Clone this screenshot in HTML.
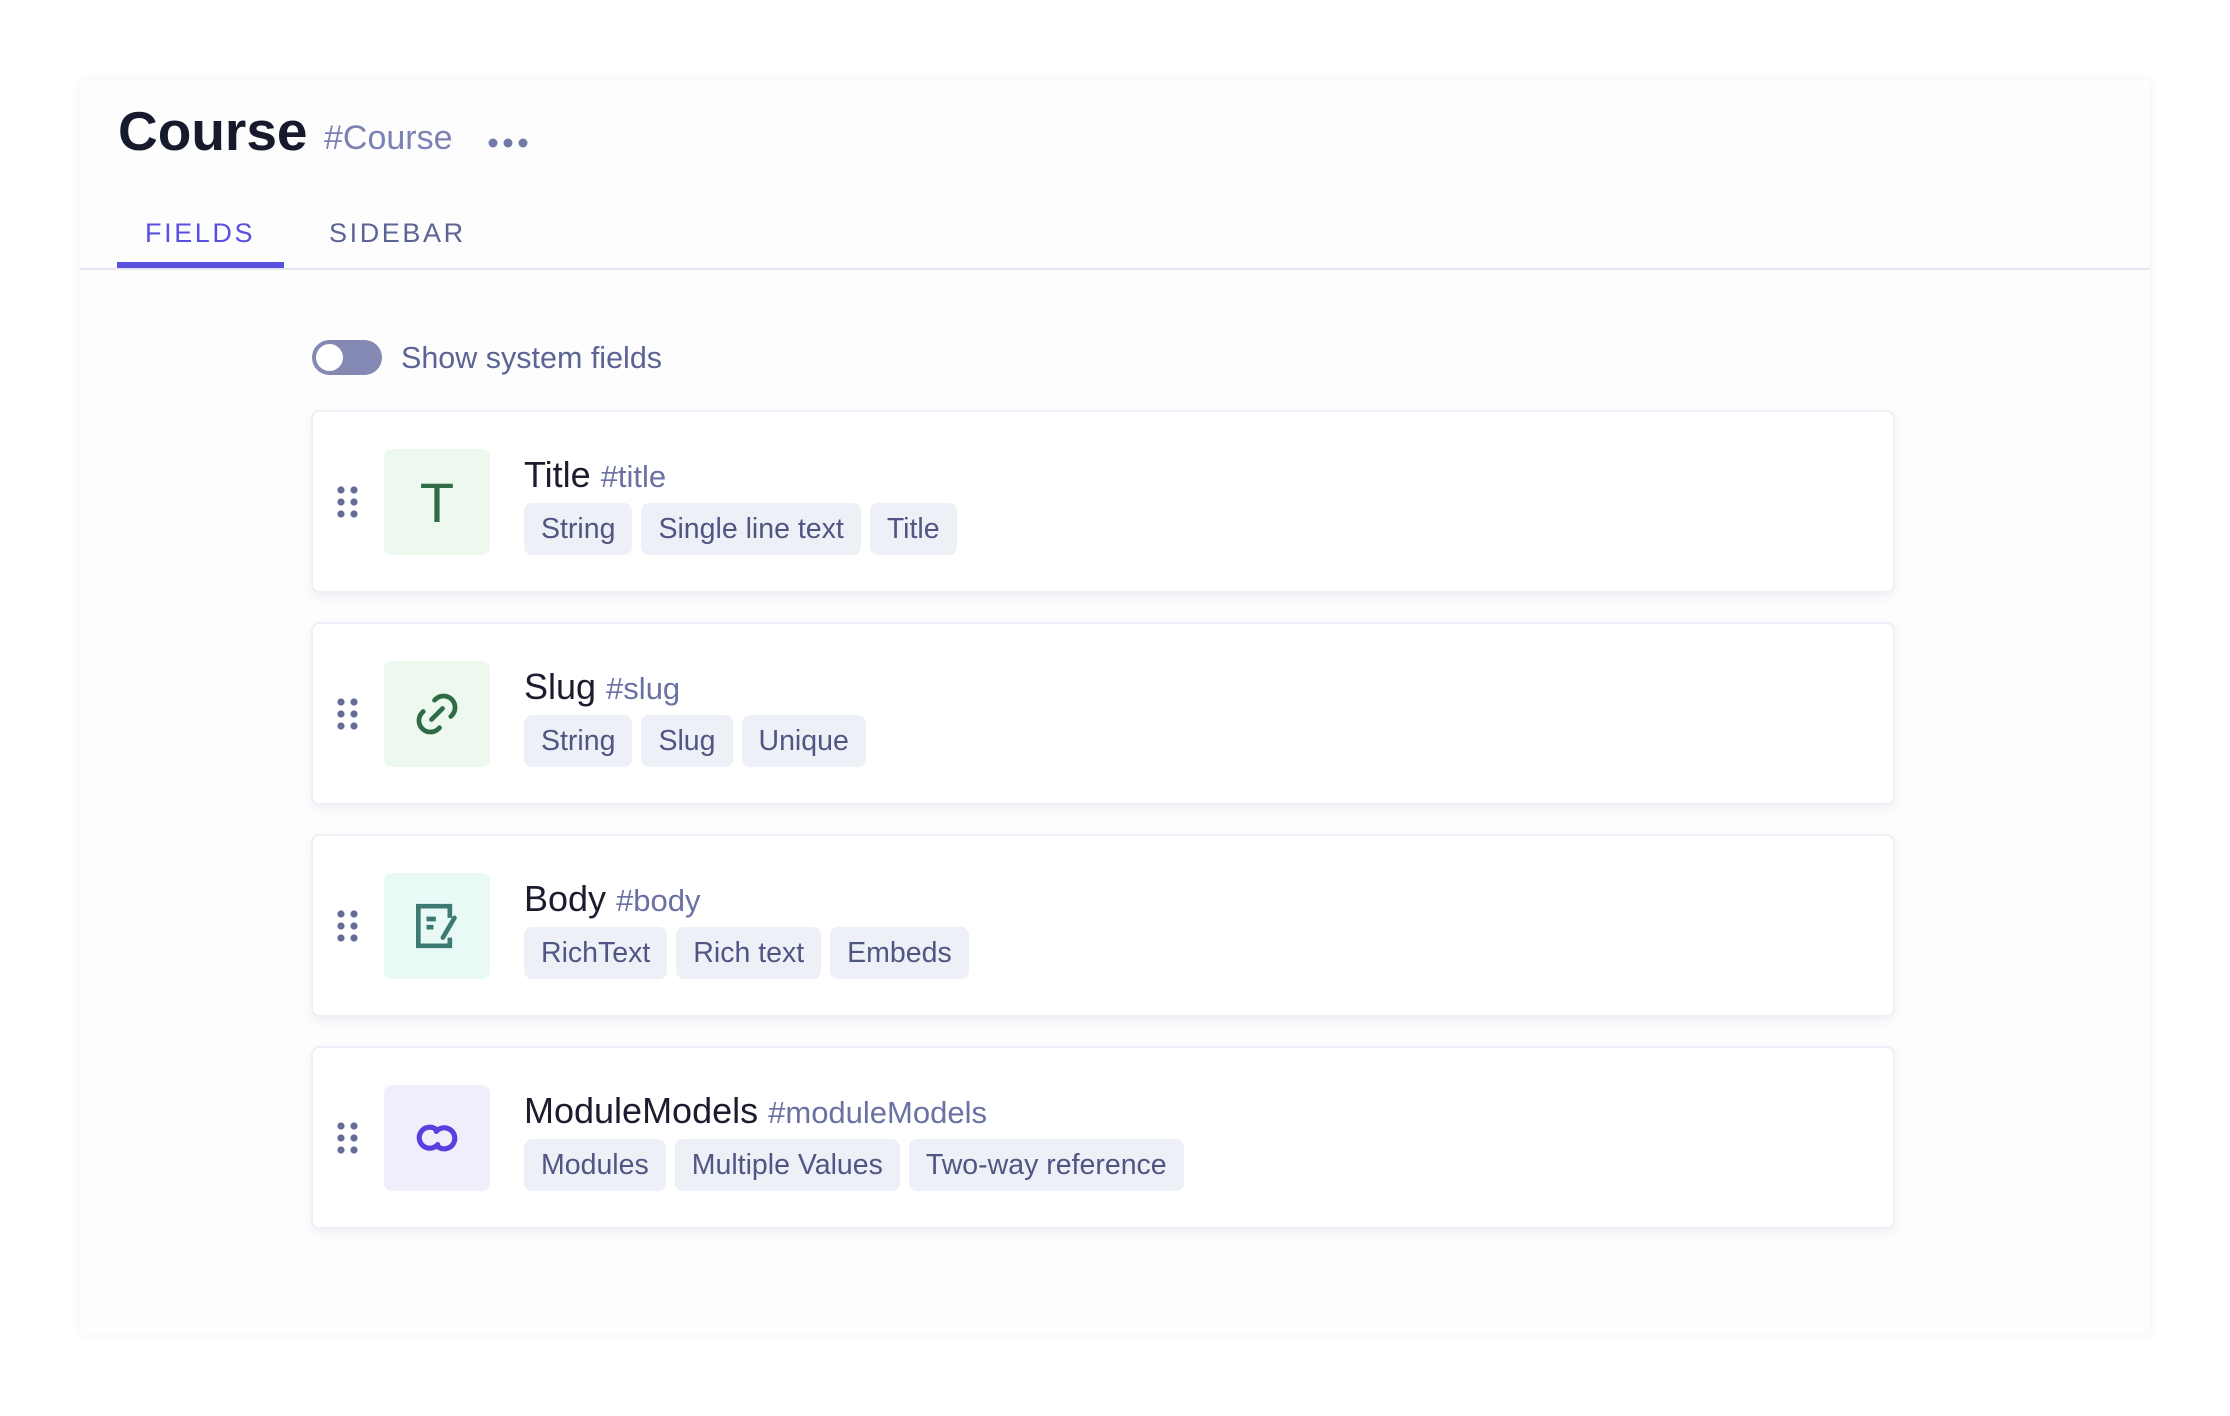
<!DOCTYPE html>
<html><head><meta charset="utf-8"><style>
*{margin:0;padding:0;box-sizing:border-box}
body{width:2230px;height:1416px;background:#fff;font-family:"Liberation Sans",sans-serif;position:relative;overflow:hidden}
.panel{position:absolute;left:80px;top:80px;width:2070px;height:1255px;background:#fdfdfe;box-shadow:0 0 8px rgba(40,50,90,.07)}
.abs{position:absolute;white-space:nowrap}
.card{position:absolute;left:311px;width:1584px;height:183px;background:#fff;border:2px solid #eef0f7;border-radius:8px;box-shadow:0 4px 10px rgba(40,50,100,.06)}
.dots{position:absolute;left:24px;top:74px;width:22px;height:32px}
.ib{position:absolute;left:71px;top:37px;width:106px;height:106px;border-radius:8px;display:flex;align-items:center;justify-content:center}
.name{position:absolute;left:211px;top:42px;font-size:36px;color:#1b1c2e;white-space:nowrap}
.name span{font-size:31px;color:#6a71a3}
.tags{position:absolute;left:211px;top:91px;display:flex;gap:9px}
.tag{height:52px;line-height:52px;padding:0 17px;background:#eef0f8;border-radius:8px;font-size:28.5px;color:#4f5682}
</style></head><body>
<div class="panel"></div>
<div class="abs" style="left:118px;top:99px;font-size:55px;font-weight:bold;color:#171a2c">Course</div>
<div class="abs" style="left:324px;top:119px;font-size:34px;color:#7b82b3">#Course</div>
<svg class="abs" style="left:488px;top:137px" width="44" height="12"><circle cx="5" cy="6" r="4.5" fill="#737aa8"/><circle cx="20" cy="6" r="4.5" fill="#737aa8"/><circle cx="35" cy="6" r="4.5" fill="#737aa8"/></svg>
<div class="abs" style="left:145px;top:218px;font-size:27px;letter-spacing:2.6px;color:#5a50e0">FIELDS</div>
<div class="abs" style="left:329px;top:218px;font-size:27px;letter-spacing:2.6px;color:#5b6494">SIDEBAR</div>
<div class="abs" style="left:80px;top:268px;width:2070px;height:2px;background:#e3e6f3"></div>
<div class="abs" style="left:117px;top:262px;width:167px;height:6px;background:#5a50e0"></div>
<div class="abs" style="left:312px;top:340px;width:70px;height:35px;border-radius:18px;background:#8389b3"></div>
<div class="abs" style="left:316px;top:344px;width:27px;height:27px;border-radius:50%;background:#fff"></div>
<div class="abs" style="left:401px;top:341px;font-size:30.5px;color:#5b6494">Show system fields</div>

<div class="card" style="top:410px">
<svg class="dots" viewBox="0 0 22 32"><g fill="#656c9c"><circle cx="4" cy="4" r="3.6"/><circle cx="17" cy="4" r="3.6"/><circle cx="4" cy="16" r="3.6"/><circle cx="17" cy="16" r="3.6"/><circle cx="4" cy="28" r="3.6"/><circle cx="17" cy="28" r="3.6"/></g></svg>
<div class="ib" style="background:#edf9ee"><span style="font-size:56px;color:#2f6b45">T</span></div>
<div class="name">Title <span>#title</span></div>
<div class="tags"><div class="tag">String</div><div class="tag">Single line text</div><div class="tag">Title</div></div>
</div>

<div class="card" style="top:622px">
<svg class="dots" viewBox="0 0 22 32"><g fill="#656c9c"><circle cx="4" cy="4" r="3.6"/><circle cx="17" cy="4" r="3.6"/><circle cx="4" cy="16" r="3.6"/><circle cx="17" cy="16" r="3.6"/><circle cx="4" cy="28" r="3.6"/><circle cx="17" cy="28" r="3.6"/></g></svg>
<div class="ib" style="background:#edf9ee"><svg width="60" height="60" viewBox="0 0 24 24" fill="none" stroke="#2f6b45" stroke-width="1.9" stroke-linecap="round"><path d="M9.8 14.2l4.4-4.4"/><path d="M11 6.5l.5-.5a4.6 4.6 0 0 1 6.5 6.5l-.5.5"/><path d="M13 17.5l-.5.5a4.6 4.6 0 0 1-6.5-6.5l.5-.5"/></svg></div>
<div class="name">Slug <span>#slug</span></div>
<div class="tags"><div class="tag">String</div><div class="tag">Slug</div><div class="tag">Unique</div></div>
</div>

<div class="card" style="top:834px">
<svg class="dots" viewBox="0 0 22 32"><g fill="#656c9c"><circle cx="4" cy="4" r="3.6"/><circle cx="17" cy="4" r="3.6"/><circle cx="4" cy="16" r="3.6"/><circle cx="17" cy="16" r="3.6"/><circle cx="4" cy="28" r="3.6"/><circle cx="17" cy="28" r="3.6"/></g></svg>
<div class="ib" style="background:#e9faf6"><svg width="56" height="56" viewBox="0 0 24 24" fill="none" stroke="#3e7a74" stroke-width="2"><path d="M17.5 8.5V3.5H4v17h13.5v-3.5"/><path d="M7.5 9h4M7.5 12.5h3"/><path d="M19.5 8.5l-5 8.5" stroke-linecap="round"/></svg></div>
<div class="name">Body <span>#body</span></div>
<div class="tags"><div class="tag">RichText</div><div class="tag">Rich text</div><div class="tag">Embeds</div></div>
</div>

<div class="card" style="top:1046px">
<svg class="dots" viewBox="0 0 22 32"><g fill="#656c9c"><circle cx="4" cy="4" r="3.6"/><circle cx="17" cy="4" r="3.6"/><circle cx="4" cy="16" r="3.6"/><circle cx="17" cy="16" r="3.6"/><circle cx="4" cy="28" r="3.6"/><circle cx="17" cy="28" r="3.6"/></g></svg>
<div class="ib" style="background:#efeffc"><svg width="56" height="56" viewBox="0 0 24 24" fill="none" stroke="#5a3fe0" stroke-width="2.2" stroke-linecap="round"><path d="M11.5 8.2A4.5 4.5 0 1 0 12.3 14.8"/><path d="M12.5 15.8A4.5 4.5 0 1 0 11.7 9.2"/></svg></div>
<div class="name">ModuleModels <span>#moduleModels</span></div>
<div class="tags"><div class="tag">Modules</div><div class="tag">Multiple Values</div><div class="tag">Two-way reference</div></div>
</div>
</body></html>
